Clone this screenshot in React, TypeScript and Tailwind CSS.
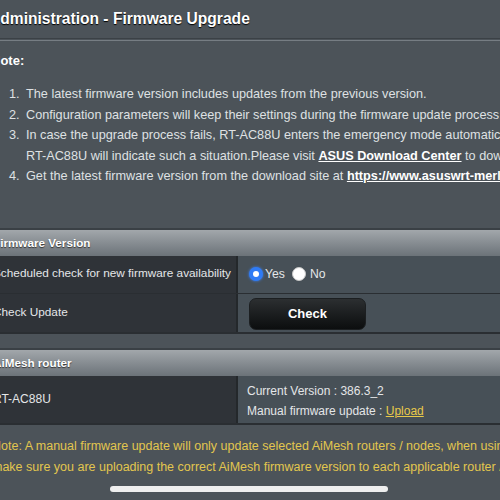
import React from "react";

const notes = [
  "The latest firmware version includes updates from the previous version.",
  "Configuration parameters will keep their settings during the firmware update process.",
];

export default function App() {
  return (
    <div className="relative w-[500px] h-[500px] overflow-hidden bg-[#4c5359] font-['Liberation_Sans',Arial,sans-serif] text-[#e4e6e8]">
      <div className="-ml-[20px] w-[680px]">
        {/* Title */}
        <div className="pt-[8px] pl-[9px] h-[38px] text-[15.6px] leading-[22px] font-bold text-white whitespace-nowrap [text-shadow:0_1px_1px_#000]">
          Administration - Firmware Upgrade
        </div>
        <div className="h-[3px] border-t border-[#3b4146] border-b border-b-[#767d83]" />

        {/* Note */}
        <div className="mt-[10px] pl-[11px] text-[13px] leading-[20px] font-bold text-white">Note:</div>
        <div className="mt-[13px] pl-[29px] text-[12.7px] leading-[20.5px] text-[#dfe1e3]">
          {notes.map((n, i) => (
            <div key={n} className="flex">
              <span className="w-[17px] shrink-0">{i + 1}.</span>
              <span className="whitespace-nowrap">{n}</span>
            </div>
          ))}
          <div className="flex">
            <span className="w-[17px] shrink-0">3.</span>
            <div className="whitespace-nowrap">
              <div>In case the upgrade process fails, RT-AC88U enters the emergency mode automatically.</div>
              <div>
                RT-AC88U will indicate such a situation.Please visit{" "}
                <span className="font-bold text-white underline">ASUS Download Center</span> to download.
              </div>
            </div>
          </div>
          <div className="flex">
            <span className="w-[17px] shrink-0">4.</span>
            <span className="whitespace-nowrap">
              Get the latest firmware version from the download site at{" "}
              <span className="font-bold text-white underline">https://www.asuswrt-merlin.net/</span>
            </span>
          </div>
        </div>

        {/* Firmware Version table */}
        <div className="mt-[41px] border-t-[2px] border-[#3a4045]">
          <div className="h-[26px] pl-[13px] flex items-center text-[11.7px] font-bold text-white bg-gradient-to-b from-[#a2a7ab] to-[#6c7379] [text-shadow:0_1px_1px_#333]">
            Firmware Version
          </div>
          <div className="flex h-[38px] border-b border-[#2a2e32]">
            <div className="w-[258px] shrink-0 bg-[#2f3338] pl-[13px] flex items-center text-[11.8px] whitespace-nowrap border-r-[2px] border-[#24282b]">
              Scheduled check for new firmware availability
            </div>
            <div className="flex-1 bg-[#475057] pl-[11px] flex items-center gap-[2px] text-[12.2px]">
              <span className="w-[14px] h-[14px] rounded-full bg-[#2f7bf5] flex items-center justify-center shadow-[0_0_3px_#3b82f6]">
                <span className="w-[6px] h-[6px] rounded-full bg-white" />
              </span>
              <span className="mr-[5px]">Yes</span>
              <span className="w-[14px] h-[14px] rounded-full bg-white border border-[#c8c8c8]" />
              <span className="ml-[2px]">No</span>
            </div>
          </div>
          <div className="flex h-[40px] border-b-[2px] border-[#2a2e32]">
            <div className="w-[258px] shrink-0 bg-[#2f3338] pl-[13px] flex items-center text-[11.8px] border-r-[2px] border-[#24282b]">
              Check Update
            </div>
            <div className="flex-1 bg-[#475057] pl-[11px] pt-[4px]">
              <div className="w-[117px] h-[32px] rounded-[7px] bg-gradient-to-b from-[#2c2f31] to-[#0c0e0f] border border-[#1c1f21] flex items-center justify-center text-[13px] font-bold text-white">
                Check
              </div>
            </div>
          </div>
        </div>

        {/* AiMesh router table */}
        <div className="mt-[14px] border-t-[2px] border-[#3a4045]">
          <div className="h-[26px] pl-[13px] flex items-center text-[11.7px] font-bold text-white bg-gradient-to-b from-[#a2a7ab] to-[#6c7379] [text-shadow:0_1px_1px_#333]">
            AiMesh router
          </div>
          <div className="flex h-[49px] border-b-[2px] border-[#2a2e32]">
            <div className="w-[258px] shrink-0 bg-[#2f3338] pl-[13px] flex items-center text-[12px] border-r-[2px] border-[#24282b]">
              RT-AC88U
            </div>
            <div className="flex-1 bg-[#475057] pl-[9px] pt-[5px] text-[12px] leading-[20px]">
              <div>Current Version : 386.3_2</div>
              <div>
                Manual firmware update : <span className="text-[#e8c94a] underline">Upload</span>
              </div>
            </div>
          </div>
        </div>

        {/* Yellow note */}
        <div className="mt-[11px] pl-[12px] text-[12.5px] leading-[21px] text-[#e2c64e] whitespace-nowrap">
          <div>Note: A manual firmware update will only update selected AiMesh routers / nodes, when using the AiMesh system,</div>
          <div>make sure you are uploading the correct AiMesh firmware version to each applicable router / node.</div>
        </div>
      </div>

      {/* iOS home indicator */}
      <div className="absolute left-[110px] top-[486px] w-[278px] h-[6px] rounded-full bg-[#eeeeee]" />
    </div>
  );
}
